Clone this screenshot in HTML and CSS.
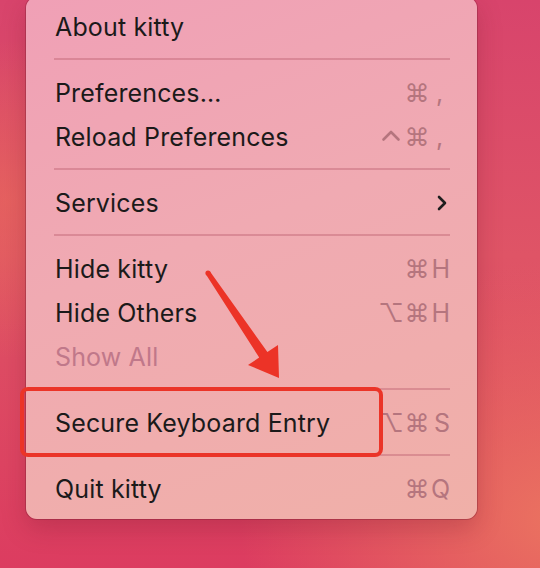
FILE: index.html
```html
<!DOCTYPE html>
<html lang="en">
<head>
<meta charset="UTF-8">
<meta name="viewport" content="width=device-width, initial-scale=1.0">
<title>kitty menu</title>
<link rel="stylesheet" href="styles.css">
</head>
<body>
<div class="desktop">
  <div class="menu">
    <div class="item"><span>About kitty</span></div>
    <div class="sep"></div>
    <div class="item"><span>Preferences…</span><span class="keys"><i>⌘</i><i class="comma">,</i></span></div>
    <div class="item"><span>Reload Preferences</span><span class="keys"><i class="ctrl"><svg width="20" height="14" viewBox="0 0 20 14"><path d="M2.5 11.5 L10 4 L17.5 11.5" fill="none" stroke="#b5757e" stroke-width="2.6" stroke-linecap="round" stroke-linejoin="round"/></svg></i><i>⌘</i><i class="comma">,</i></span></div>
    <div class="sep"></div>
    <div class="item"><span>Services</span>
      <svg class="chevron" width="12" height="18" viewBox="0 0 12 18"><path d="M3 3 L9 9 L3 15" fill="none" stroke="#1e1e1e" stroke-width="2.6" stroke-linecap="round" stroke-linejoin="round"/></svg>
    </div>
    <div class="sep"></div>
    <div class="item"><span>Hide kitty</span><span class="keys"><i>⌘</i><i>H</i></span></div>
    <div class="item"><span>Hide Others</span><span class="keys"><i>⌥</i><i>⌘</i><i>H</i></span></div>
    <div class="item disabled"><span>Show All</span></div>
    <div class="sep"></div>
    <div class="item"><span>Secure Keyboard Entry</span><span class="keys"><i>⌥</i><i>⌘</i><i>S</i></span></div>
    <div class="sep"></div>
    <div class="item"><span>Quit kitty</span><span class="keys"><i>⌘</i><i>Q</i></span></div>
  </div>

  <!-- annotation drawn on top of the screenshot -->
  <div class="highlight"></div>
  <svg class="arrow" width="540" height="568" viewBox="0 0 540 568">
    <polygon fill="#ec3327" points="210,271.6 267.4,352 278,345 279,378 248,365 259.2,357.6 206,274.4"/>
    <circle cx="208" cy="273" r="2.6" fill="#ec3327"/>
  </svg>
</div>
</body>
</html>
```

FILE: styles.css
```css
  body {
    margin: 0;
    font-family: Inter, "Noto Sans", sans-serif;
  }
  .desktop {
    position: relative;
    width: 540px;
    height: 568px;
    overflow: hidden;
    background:
      radial-gradient(ellipse 180px 160px at 10px 200px, rgba(236,110,90,0.55), rgba(236,110,90,0) 100%),
      radial-gradient(ellipse 320px 260px at 560px 520px, rgba(236,120,96,0.9), rgba(236,120,96,0) 100%),
      linear-gradient(180deg, #d8446c 0%, #df5466 45%, #dc3c60 100%);
  }
  .menu {
    width: 395px;
    margin: -3px 0 0 26px;
    padding: 8px 27px 8px 29px;
    border-radius: 11px;
    background:
      linear-gradient(160deg, #f0a0b6 0%, #f0aab2 45%, #f0b0a8 100%);
    box-shadow: 0 0 0 1px rgba(120,30,50,0.35), 0 10px 24px rgba(110,20,40,0.25);
    color: #1b1a1a;
    font-size: 25px;
    letter-spacing: 0.15px;
  }
  .item {
    height: 44px;
    display: flex;
    align-items: center;
    justify-content: space-between;
  }
  .item.disabled {
    color: #c0788a;
  }
  .sep {
    height: 22px;
    margin-left: -1px;
    position: relative;
  }
  .sep::after {
    content: "";
    position: absolute;
    left: 0;
    right: 0;
    top: 9px;
    height: 2px;
    background: rgba(190,100,115,0.45);
  }
  .keys {
    display: flex;
    align-items: center;
    color: #b5757e;
    letter-spacing: 0;
  }
  .keys i {
    font-style: normal;
    display: inline-block;
    text-align: center;
    width: 26px;
  }
  .keys i:last-child {
    width: 20px;
    text-align: right;
  }
  .keys i.comma {
    text-align: left;
    padding-left: 6px;
    width: 14px;
  }
  .keys i.ctrl {
    display: flex;
    justify-content: center;
    padding-bottom: 4px;
  }
  .chevron {
    margin-right: 2px;
  }
  .highlight {
    position: absolute;
    left: 20px;
    top: 387px;
    width: 355px;
    height: 62px;
    border: 4px solid #eb3428;
    border-radius: 8px;
  }
  .arrow {
    position: absolute;
    left: 0;
    top: 0;
  }
```
